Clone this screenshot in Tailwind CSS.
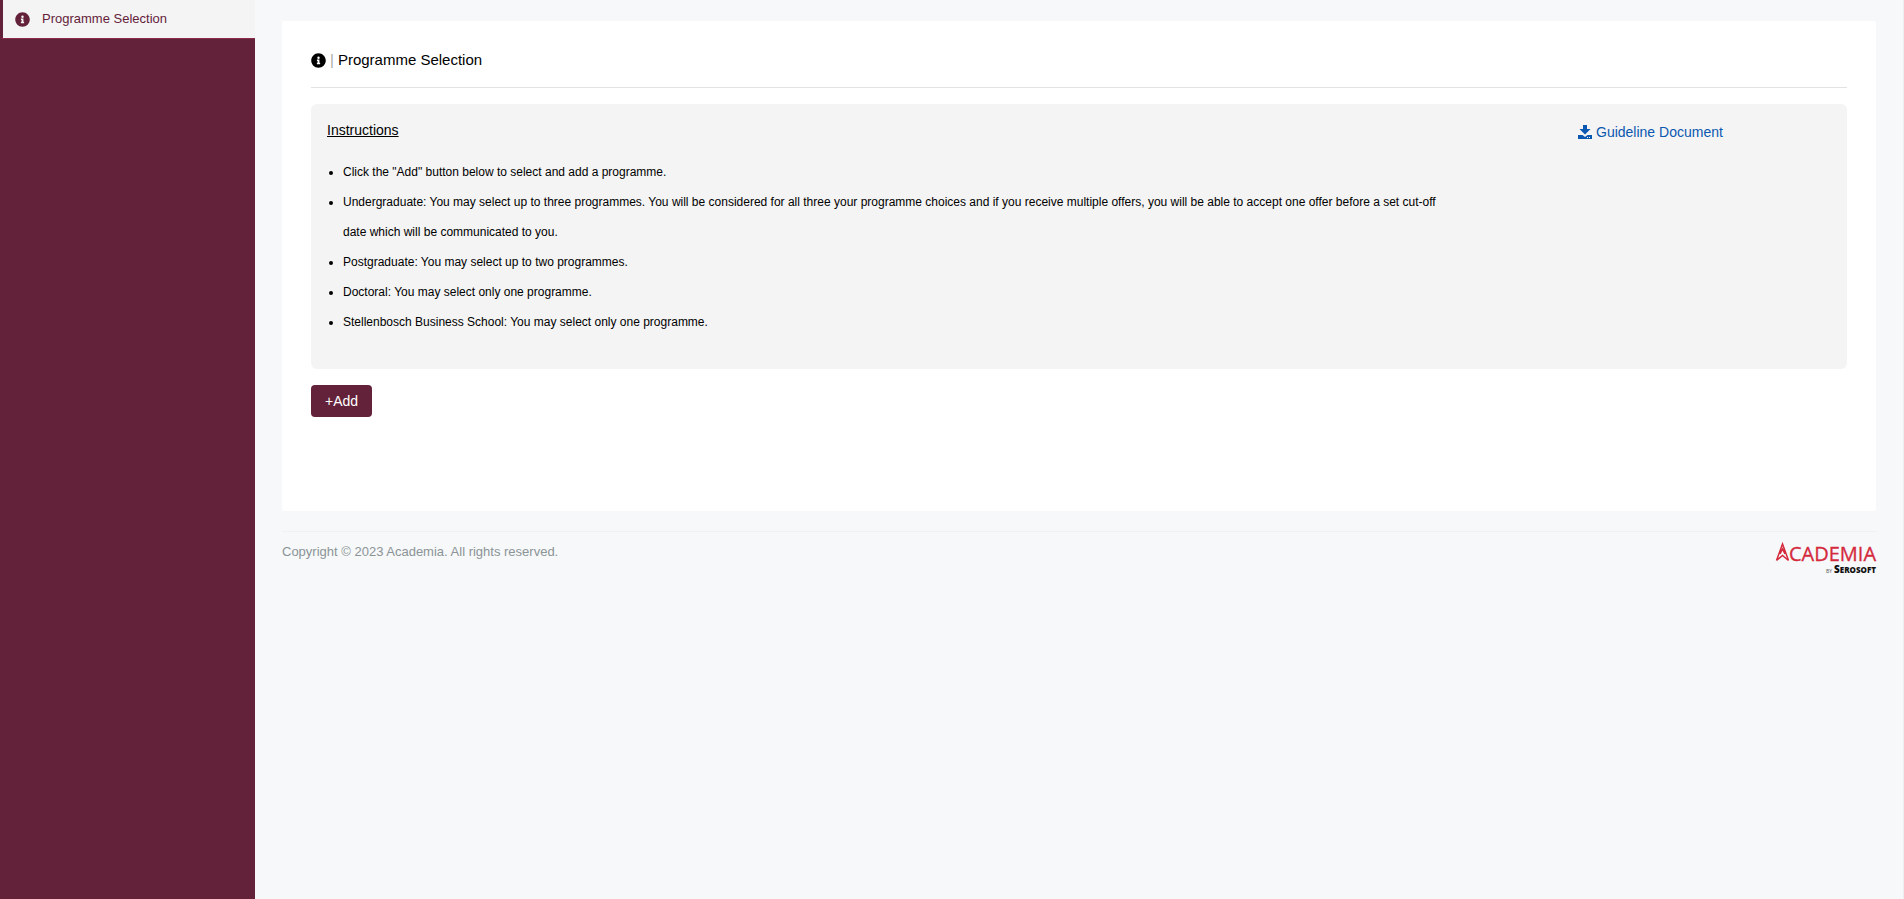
<!DOCTYPE html>
<html lang="en">
<head>
  <meta charset="UTF-8" />
  <meta name="viewport" content="width=device-width, initial-scale=1.0" />
  <title>Programme Selection</title>
  <script src="https://cdn.jsdelivr.net/npm/@tailwindcss/browser@4"></script>
</head>

<body class="flex min-h-screen bg-[#f6f8fa] font-['Liberation_Sans',Arial,sans-serif] text-black">

  <!-- Sidebar -->
  <aside class="w-[255px] shrink-0 bg-[#64223a]">
    <nav>
      <a href="#" class="flex h-[39px] items-center border-b border-l-3 border-b-[#8c2a4c] border-l-[#64223a] bg-[#f4f4f4] pl-3 text-[13px] text-[#64223a]">
        <svg class="mr-3 size-[15px]" viewBox="0 0 512 512" fill="currentColor"><path d="M256 8C119 8 8 119 8 256s111 248 248 248 248-111 248-248S393 8 256 8zm0 110a42 42 0 1 1 0 84 42 42 0 0 1 0-84zm56 254c0 7-5 12-12 12h-88c-7 0-12-5-12-12v-24c0-7 5-12 12-12h12v-64h-12c-7 0-12-5-12-12v-24c0-7 5-12 12-12h64c7 0 12 5 12 12v100h12c7 0 12 5 12 12v24z"/></svg>
        Programme Selection
      </a>
    </nav>
  </aside>

  <div class="min-w-0 flex-1 border-r border-[#eceff1] px-[27px] pt-[21px]">

    <!-- Programme card -->
    <main class="min-h-[490px] rounded-xs bg-white px-[29px] pt-[29px]">
      <h1 class="flex h-5 items-center text-[15px]">
        <svg class="size-[15px]" viewBox="0 0 512 512" fill="currentColor"><path d="M256 8C119 8 8 119 8 256s111 248 248 248 248-111 248-248S393 8 256 8zm0 110a42 42 0 1 1 0 84 42 42 0 0 1 0-84zm56 254c0 7-5 12-12 12h-88c-7 0-12-5-12-12v-24c0-7 5-12 12-12h12v-64h-12c-7 0-12-5-12-12v-24c0-7 5-12 12-12h64c7 0 12 5 12 12v100h12c7 0 12 5 12 12v24z"/></svg>
        <span class="mx-1 text-[#aaaaaa]">|</span>
        Programme Selection
      </h1>
      <hr class="mt-[17px] border-[#e2e2e2]" />

      <section class="mt-4 grid grid-cols-4 rounded-md bg-[#f4f4f4] pt-4 pb-8">
        <div class="col-span-3 px-4">
          <h2 class="text-sm underline">Instructions</h2>
          <ul class="mt-[17px] list-disc pl-4 text-xs leading-[30px]">
            <li>Click the "Add" button below to select and add a programme.</li>
            <li>Undergraduate: You may select up to three programmes. You will be considered for all three your programme choices and if you receive multiple offers, you will be able to accept one offer before a set cut-off date which will be communicated to you.</li>
            <li>Postgraduate: You may select up to two programmes.</li>
            <li>Doctoral: You may select only one programme.</li>
            <li>Stellenbosch Business School: You may select only one programme.</li>
          </ul>
        </div>
        <div class="pt-[2px] pl-[115px]">
          <a href="#" class="flex items-center text-sm text-[#0a58b0]">
            <svg class="mr-1 size-[14px]" viewBox="0 0 14 14"><path fill="currentColor" d="M5 0h4v4h3.500L7 9.500 1.500 4H5zM0 10h4.500L7 12l2.500-2H14V14H0z"/><path fill="#f4f4f4" d="M9 12h1v1H9zM11 12h1v1h-1z"/></svg>
            Guideline Document
          </a>
        </div>
      </section>

      <button type="button" class="mt-4 h-8 rounded-sm bg-[#64223a] px-[14px] text-sm text-white">+Add</button>
    </main>

    <!-- Footer -->
    <footer class="mt-5 flex items-start justify-between border-t border-[#eff1f3] pt-[10px] text-[13px] text-[#8b9496]">
      <p>Copyright © 2023 Academia. All rights reserved.</p>
      <svg class="h-8 w-[101px] overflow-visible" viewBox="0 0 101 32" role="img" aria-label="Academia by Serosoft">
        <path d="M1.500 18.500 7.500 2l6 16.500M1.500 18.500l6-5 6 5M5 12l2.500-5 2.500 5" fill="none" stroke="#d42a3c" stroke-width="1.500"/>
        <text x="14" y="19" font-family="Open Sans, sans-serif" font-size="20" fill="#d42a3c" stroke="#d42a3c" stroke-width="0.300">CADEMIA</text>
        <text x="51" y="31" font-family="Open Sans, sans-serif" font-size="5" fill="#555555">BY</text>
        <text x="101" y="31" text-anchor="end" font-family="Open Sans, sans-serif" font-weight="800" font-size="10" fill="#111111">S<tspan font-size="8">EROSOFT</tspan></text>
      </svg>
    </footer>
  </div>

</body>

</html>
